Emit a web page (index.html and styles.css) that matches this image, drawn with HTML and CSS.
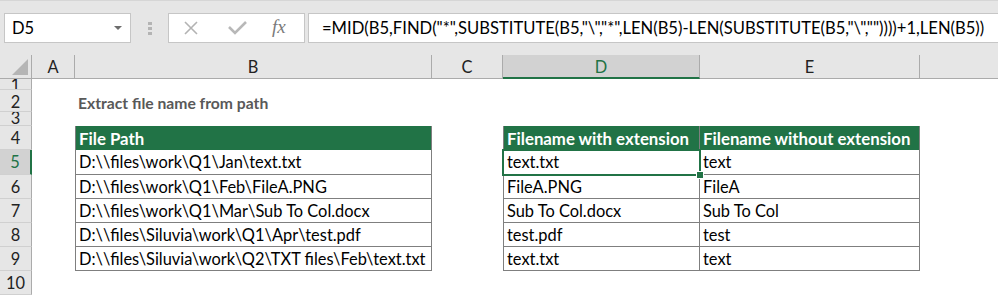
FILE: index.html
```html
<!DOCTYPE html>
<html>
<head>
    <meta charset="UTF-8">
    <title>Extract file name from path</title>
    <link rel="stylesheet" href="styles.css">
</head>
<body>
    <div class="toolbar">
        <div class="namebox">
            <span>D5</span>
            <svg class="caret" width="8" height="5" viewBox="0 0 8 5"><polygon points="0,0 8,0 4,4" fill="#6d6d6d"/></svg>
        </div>
        <div class="grip"><i></i><i></i><i></i></div>
        <div class="fnbtns">
            <svg width="16" height="14" viewBox="0 0 16 14"><path d="M2 1 L14 13 M14 1 L2 13" stroke="#b3b3b3" stroke-width="1.6" fill="none"/></svg>
            <svg width="19" height="14" viewBox="0 0 19 14"><path d="M1 6 L7 12 L18 1" stroke="#b8b8b8" stroke-width="2.6" fill="none"/></svg>
            <span class="fx">fx</span>
        </div>
        <div class="formula">=MID(B5,FIND("*",SUBSTITUTE(B5,"\","*",LEN(B5)-LEN(SUBSTITUTE(B5,"\",""))))+1,LEN(B5))</div>
    </div>

    <div class="sheet">
        <!-- column headers -->
        <div class="corner"><svg width="16" height="16" viewBox="0 0 16 16"><polygon points="0,16 16,16 16,0" fill="#b5b5b5"/></svg></div>
        <div class="ch">A</div>
        <div class="ch">B</div>
        <div class="ch">C</div>
        <div class="ch active">D</div>
        <div class="ch">E</div>
        <div class="ch last"></div>

        <!-- row 1 -->
        <div class="rh small">1</div>
        <div></div><div></div><div></div><div></div><div></div><div></div>

        <!-- row 2 -->
        <div class="rh">2</div>
        <div></div>
        <div class="title">Extract file name from path</div>
        <div></div><div></div><div></div><div></div>

        <!-- row 3 -->
        <div class="rh small">3</div>
        <div></div><div></div><div></div><div></div><div></div><div></div>

        <!-- row 4 -->
        <div class="rh">4</div>
        <div></div>
        <div class="th first">File Path</div>
        <div></div>
        <div class="th first">Filename with extension</div>
        <div class="th">Filename without extension</div>
        <div></div>

        <!-- row 5 -->
        <div class="rh active">5</div>
        <div></div>
        <div class="td first">D:\\files\work\Q1\Jan\text.txt</div>
        <div></div>
        <div class="td first selected">text.txt<span class="sel"><b class="handle"></b></span></div>
        <div class="td">text</div>
        <div></div>

        <!-- row 6 -->
        <div class="rh">6</div>
        <div></div>
        <div class="td first">D:\\files\work\Q1\Feb\FileA.PNG</div>
        <div></div>
        <div class="td first">FileA.PNG</div>
        <div class="td">FileA</div>
        <div></div>

        <!-- row 7 -->
        <div class="rh">7</div>
        <div></div>
        <div class="td first">D:\\files\work\Q1\Mar\Sub To Col.docx</div>
        <div></div>
        <div class="td first">Sub To Col.docx</div>
        <div class="td">Sub To Col</div>
        <div></div>

        <!-- row 8 -->
        <div class="rh">8</div>
        <div></div>
        <div class="td first">D:\\files\Siluvia\work\Q1\Apr\test.pdf</div>
        <div></div>
        <div class="td first">test.pdf</div>
        <div class="td">test</div>
        <div></div>

        <!-- row 9 -->
        <div class="rh">9</div>
        <div></div>
        <div class="td first">D:\\files\Siluvia\work\Q2\TXT files\Feb\text.txt</div>
        <div></div>
        <div class="td first">text.txt</div>
        <div class="td">text</div>
        <div></div>

        <!-- row 10 -->
        <div class="rh">10</div>
        <div></div><div></div><div></div><div></div><div></div><div></div>
    </div>
</body>
</html>
```

FILE: styles.css
```css
body {
    margin: 0;
    width: 998px;
    height: 296px;
    overflow: hidden;
    background: #fff;
    font-family: Lato, "Open Sans", sans-serif;
    color: #000;
}

/* formula bar */
.toolbar {
    height: 55px;
    box-sizing: border-box;
    padding-top: 13px;
    background: #e6e6e6;
    border-top: 1px solid #d6d6d6;
    display: flex;
    align-items: flex-start;
}
.toolbar > div {
    height: 30px;
    box-sizing: border-box;
    background: #fff;
    border: 1px solid #c6c6c6;
    margin-top: -1px;
}
.namebox {
    margin-left: 4px;
    width: 127px;
    display: flex;
    align-items: center;
    justify-content: space-between;
    padding: 0 8px 0 7px;
    font-size: 16.5px;
}
.caret {
    margin-top: 1px;
}
.toolbar > .grip {
    width: 37px;
    background: none;
    border: none;
    display: flex;
    flex-direction: column;
    align-items: center;
    justify-content: center;
    gap: 2px;
}
.grip i {
    display: block;
    width: 4px;
    height: 3px;
    background: #b4b4b4;
}
.fnbtns {
    width: 137px;
    display: flex;
    align-items: center;
    padding-left: 14px;
}
.fnbtns svg:first-child {
    margin-right: 29px;
}
.fnbtns svg:nth-child(2) {
    margin-right: 25px;
}
.fx {
    font-family: "Liberation Serif", serif;
    font-style: italic;
    font-size: 19px;
    color: #7a7a7a;
    margin-top: -3px;
}
.toolbar > .formula {
    flex: 1;
    margin-left: 3px;
    border-right: none;
    padding-left: 13px;
    font-size: 16.6px;
    line-height: 28px;
    white-space: nowrap;
    overflow: hidden;
}

/* worksheet */
.sheet {
    display: grid;
    grid-template-columns: 32px 43px 357px 71px 197px 220px 1fr;
    grid-template-rows: 24px 11px 22px 14px 24px 25px 24px 24px 24px 24px 24px;
    font-size: 16.4px;
}
.sheet > div {
    box-sizing: border-box;
    min-width: 0;
    white-space: nowrap;
}
.corner {
    background: #e6e6e6;
    border-right: 1px solid #ababab;
    border-bottom: 1px solid #ababab;
    display: flex;
    align-items: flex-end;
    justify-content: flex-end;
    padding: 0 3px 3px 0;
}
.ch {
    background: #e6e6e6;
    border-right: 1px solid #ababab;
    border-bottom: 1px solid #ababab;
    text-align: center;
    line-height: 24px;
    color: #222;
}
.ch.last {
    border-right: none;
}
.ch.active {
    background: #d2d2d2;
    color: #217346;
    border-bottom: 2px solid #217346;
}
.rh {
    background: #e6e6e6;
    border-right: 1px solid #ababab;
    border-bottom: 1px solid #d0d0d0;
    text-align: center;
    line-height: 24px;
    color: #222;
    overflow: hidden;
}
.rh.small {
    line-height: 12px;
}
.rh.active {
    background: #d2d2d2;
    color: #217346;
    border-right: 2px solid #217346;
}
.title {
    font-size: 15.7px;
    font-weight: bold;
    color: #595959;
    padding-left: 3px;
    line-height: 26px;
}
.th {
    background: #217346;
    color: #fff;
    font-weight: bold;
    font-size: 16.8px;
    padding-left: 3px;
    line-height: 25px;
    border-right: 1px solid #7f7f7f;
}
.td {
    padding-left: 3px;
    line-height: 24px;
    border-right: 1px solid #7f7f7f;
    border-bottom: 1px solid #7f7f7f;
}
.first {
    border-left: 1px solid #7f7f7f;
}
.selected {
    position: relative;
}
.sel {
    position: absolute;
    left: -2px;
    top: -1px;
    right: -2px;
    bottom: -2px;
    border: 2px solid #217346;
}
.handle {
    position: absolute;
    right: -5px;
    bottom: -5px;
    width: 6px;
    height: 6px;
    background: #217346;
    border: 1px solid #fff;
}
```
